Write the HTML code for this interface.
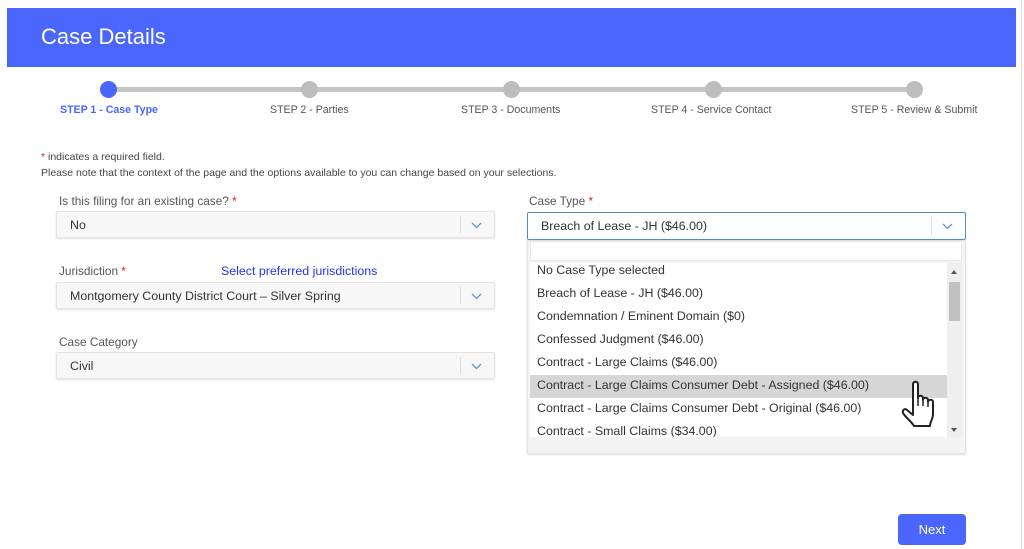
<!DOCTYPE html>
<html><head><style>
*{margin:0;padding:0;box-sizing:border-box}
body{width:1024px;height:549px;background:#fff;font-family:"Liberation Sans",sans-serif;position:relative;overflow:hidden;color:#333}
.a{position:absolute}
.hdr{left:7px;top:8px;width:1009px;height:59px;background:#4a66fd}
.hdr span{position:absolute;left:34px;top:16px;color:#fff;font-size:22px}
.line{top:87px;height:5px;background:#c4c4c4}
.dot{width:17px;height:17px;border-radius:50%;background:#bdbdbd;top:81px}
.step{top:104px;font-size:10.6px;color:#555}
.sm{font-size:10.5px;color:#444}
.lbl{font-size:11.8px;color:#555}
.sel{height:27px;background:#f7f7f7;border:1px solid #e4e4e4;border-radius:2px;font-size:12.4px;color:#333;padding:6px 13px;box-shadow:0 1px 2px rgba(0,0,0,.12)}
.sel i{position:absolute;right:33px;top:4px;bottom:4px;border-left:1px solid #ddd}
.sel svg{position:absolute;right:12px;top:10px}
.r{color:#d22}
.it{left:537px;font-size:12.4px;color:#333}
</style></head><body>
<div class="a hdr"><span>Case Details</span></div>
<div class="a" style="left:1021px;top:0;width:1px;height:549px;background:#ddd"></div>
<div class="a line" style="left:110px;width:806px"></div>
<div class="a dot" style="left:100px;background:#4a66fd"></div>
<div class="a dot" style="left:301px"></div>
<div class="a dot" style="left:503px"></div>
<div class="a dot" style="left:705px"></div>
<div class="a dot" style="left:906px"></div>
<div class="a step" style="left:60px;color:#4a66fd;font-weight:bold">STEP 1 - Case Type</div>
<div class="a step" style="left:270px">STEP 2 - Parties</div>
<div class="a step" style="left:461px">STEP 3 - Documents</div>
<div class="a step" style="left:651px">STEP 4 - Service Contact</div>
<div class="a step" style="left:851px">STEP 5 - Review &amp; Submit</div>
<div class="a sm" style="left:41px;top:151px"><span class="r">*</span> indicates a required field.</div>
<div class="a sm" style="left:41px;top:167px">Please note that the context of the page and the options available to you can change based on your selections.</div>
<div class="a lbl" style="left:59px;top:194px">Is this filing for an existing case? <span class="r">*</span></div>
<div class="a sel" style="left:56px;top:211px;width:439px">No<i></i><svg width="11" height="7"><path d="M1 1l4.5 4.5L10 1" stroke="#5a9ad6" fill="none" stroke-width="1.3"/></svg></div>
<div class="a lbl" style="left:59px;top:264px">Jurisdiction <span class="r">*</span></div>
<div class="a" style="left:221px;top:264px;font-size:12.4px;color:#2233ee">Select preferred jurisdictions</div>
<div class="a sel" style="left:56px;top:282px;width:439px">Montgomery County District Court – Silver Spring<i></i><svg width="11" height="7"><path d="M1 1l4.5 4.5L10 1" stroke="#5a9ad6" fill="none" stroke-width="1.3"/></svg></div>
<div class="a lbl" style="left:59px;top:335px">Case Category</div>
<div class="a sel" style="left:56px;top:352px;width:439px">Civil<i></i><svg width="11" height="7"><path d="M1 1l4.5 4.5L10 1" stroke="#5a9ad6" fill="none" stroke-width="1.3"/></svg></div>
<div class="a lbl" style="left:529px;top:194px">Case Type <span class="r">*</span></div>
<div class="a" style="left:527px;top:240px;width:439px;height:214px;background:#f4f4f4;border:1px solid #e2e2e2;box-shadow:0 1px 2px rgba(0,0,0,.12)"></div>
<div class="a sel" style="left:527px;top:212px;width:439px;height:28px;background:#fff;border:1px solid #4a8fcc;box-shadow:none">Breach of Lease - JH ($46.00)<i></i><svg width="11" height="7"><path d="M1 1l4.5 4.5L10 1" stroke="#5a9ad6" fill="none" stroke-width="1.3"/></svg></div>
<div class="a" style="left:530px;top:241px;width:432px;height:20px;background:#fff;border:1px solid #e8e8e8"></div>
<div class="a" style="left:530px;top:263px;width:432px;height:174px;background:#fff"></div>
<div class="a" style="left:530px;top:375px;width:417px;height:23px;background:#d6d6d6"></div>
<div class="a" style="left:947px;top:263px;width:15px;height:174px;background:#efefef"></div>
<div class="a" style="left:949px;top:282px;width:11px;height:39px;background:#c1c1c1"></div>
<div class="a" style="left:951px;top:270px;border:3px solid transparent;border-bottom:4px solid #555;border-top:0"></div>
<div class="a" style="left:951px;top:428px;border:3px solid transparent;border-top:4px solid #555;border-bottom:0"></div>
<div class="a it" style="top:263px">No Case Type selected</div>
<div class="a it" style="top:286px">Breach of Lease - JH ($46.00)</div>
<div class="a it" style="top:309px">Condemnation / Eminent Domain ($0)</div>
<div class="a it" style="top:332px">Confessed Judgment ($46.00)</div>
<div class="a it" style="top:355px">Contract - Large Claims ($46.00)</div>
<div class="a it" style="top:378px">Contract - Large Claims Consumer Debt - Assigned ($46.00)</div>
<div class="a it" style="top:401px">Contract - Large Claims Consumer Debt - Original ($46.00)</div>
<div class="a it" style="top:424px;height:13px;overflow:hidden">Contract - Small Claims ($34.00)</div>
<svg class="a" style="left:900px;top:380px" width="40" height="50" viewBox="0 0 40 50"><path d="M13 4c0-3 5-3 5 0v14c0-3 5-3 5 0v2c0-3 5-3 5 0v2c0-3 5-3 5 0v12c0 5-3 8-3 12H14c-2-4-9-9-11-13-1-3 2-5 4-3l6 5z" fill="#fff" stroke="#222" stroke-width="2" stroke-linejoin="round"/><path d="M18 18v8M23 20v6M28 22v5" stroke="#222" stroke-width="1.5"/></svg>
<div class="a" style="left:898px;top:514px;width:68px;height:31px;background:#4a66fd;border-radius:4px;color:#fff;font-size:13px;text-align:center;line-height:31px">Next</div>
</body></html>
